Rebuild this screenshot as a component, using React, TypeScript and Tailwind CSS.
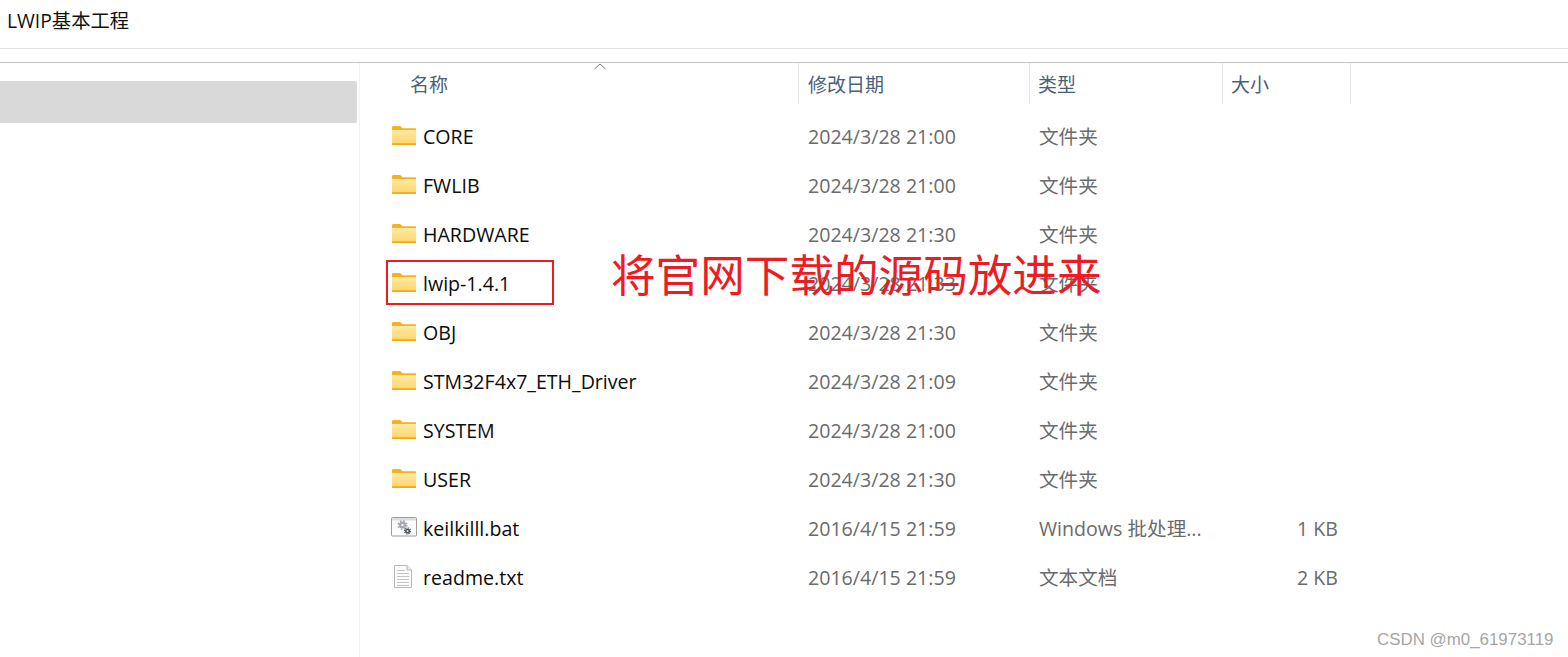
const cjk = "font-['Open_Sans','Noto_Sans_CJK_SC',sans-serif]";

function Folder() {
  return (
    <svg width="24" height="19" viewBox="0 0 24 19" className="shrink-0">
      <defs>
        <linearGradient id="fbody" x1="0" y1="0" x2="0" y2="1">
          <stop offset="0" stopColor="#ffe9a6" />
          <stop offset="1" stopColor="#fdd468" />
        </linearGradient>
      </defs>
      <path d="M0 1.500C0 .6.600 0 1.500 0h6c.6 0 1 .2 1.400.6L10.500 2.200H23c.6 0 1 .4 1 1V5H0Z" fill="#f6b21c" />
      <path d="M0 4h23c.6 0 1 .4 1 1v13c0 .6-.4 1-1 1H1c-.6 0-1-.4-1-1Z" fill="url(#fbody)" />
      <path d="M0 17.300h24V18c0 .6-.4 1-1 1H1c-.6 0-1-.4-1-1Z" fill="#efa91d" />
    </svg>
  );
}

function Bat() {
  return (
    <svg width="26" height="20" viewBox="0 0 26 20" className="shrink-0">
      <rect x="0.500" y="0.500" width="25" height="18.500" rx="1" fill="#fcfcfc" stroke="#9c9c9c" />
      <path d="M1 1h24v2.500H1Z" fill="#dedede" />
      <circle cx="11.500" cy="8" r="3.600" fill="#a3a8ad" />
      <circle cx="11.500" cy="8" r="4.300" fill="none" stroke="#a3a8ad" strokeWidth="1.400" strokeDasharray="1.700 1.700" />
      <circle cx="11.500" cy="8" r="1.300" fill="#eeeeee" />
      <circle cx="16.500" cy="14" r="2.600" fill="#565c62" />
      <circle cx="16.500" cy="14" r="3.100" fill="none" stroke="#565c62" strokeWidth="1.100" strokeDasharray="1.300 1.100" />
      <circle cx="16.500" cy="14" r="0.900" fill="#dddddd" />
    </svg>
  );
}

function Txt() {
  return (
    <svg width="24" height="23" viewBox="0 0 24 23" className="shrink-0">
      <path d="M3.500.5h12.500l4.500 4.500v17.500h-17Z" fill="#fdfdfd" stroke="#b8b8b8" />
      <path d="M16 .5v4.500h4.500" fill="#eeeeee" stroke="#b8b8b8" />
      <path d="M6 5.500h8M6 8.500h12M6 11.500h12M6 14.500h12M6 17.500h12M6 20.500h12" stroke="#c2c2c2" strokeWidth="1" />
    </svg>
  );
}

const rows = [
  { n: "CORE", d: "2024/3/28 21:00", t: "文件夹", s: "", i: <Folder /> },
  { n: "FWLIB", d: "2024/3/28 21:00", t: "文件夹", s: "", i: <Folder /> },
  { n: "HARDWARE", d: "2024/3/28 21:30", t: "文件夹", s: "", i: <Folder /> },
  { n: "lwip-1.4.1", d: "2024/3/28 21:33", t: "文件夹", s: "", i: <Folder /> },
  { n: "OBJ", d: "2024/3/28 21:30", t: "文件夹", s: "", i: <Folder /> },
  { n: "STM32F4x7_ETH_Driver", d: "2024/3/28 21:09", t: "文件夹", s: "", i: <Folder /> },
  { n: "SYSTEM", d: "2024/3/28 21:00", t: "文件夹", s: "", i: <Folder /> },
  { n: "USER", d: "2024/3/28 21:30", t: "文件夹", s: "", i: <Folder /> },
  { n: "keilkilll.bat", d: "2016/4/15 21:59", t: "Windows 批处理...", s: "1 KB", i: <Bat /> },
  { n: "readme.txt", d: "2016/4/15 21:59", t: "文本文档", s: "2 KB", i: <Txt /> },
];

export default function App() {
  return (
    <div className={`relative h-[657px] w-[1568px] overflow-hidden bg-white ${cjk}`}>
      <div className="flex h-[48px] items-center pl-[7px] pb-[6px] text-[19.3px] text-[#111111]">LWIP基本工程</div>
      <div className="h-[14px] border-t border-[#e2e2e2]" />
      <div className="flex h-[595px] border-t border-[#c2c2c2]">
        <aside className="h-full w-[360px] shrink-0 border-r border-[#f1f1f1] pt-[18px]">
          <div className="h-[42px] w-[357px] rounded-r-[2px] bg-[#d9d9d9]" />
        </aside>
        <main className="relative flex-1">
          <span className="absolute left-[234px] top-0">
            <svg width="12" height="7" viewBox="0 0 12 7" fill="none" stroke="#707070" className="block"><path d="M.5 6 6 1l5.500 5" /></svg>
          </span>
          <div className="flex h-[41px] text-[19px] text-[#4c607a]">
            <div className="flex w-[438px] items-center pt-[3px] pl-[50px]">名称</div>
            <div className="flex w-[231px] items-center border-l border-[#e5e5e5] pt-[3px] pl-[9px]">修改日期</div>
            <div className="flex w-[193px] items-center border-l border-[#e5e5e5] pt-[3px] pl-[8px]">类型</div>
            <div className="flex w-[129px] items-center border-x border-[#e5e5e5] pt-[3px] pl-[8px]">大小</div>
          </div>
          <div className="pt-[8px]">
            {rows.map((r) => (
              <div key={r.n} className="flex h-[49px] items-center text-[19.6px]">
                <div className="flex w-[438px] items-center pl-[31px]">
                  <span className={`flex w-[32px] -translate-y-[1px] items-center ${r.i.type === Folder ? "pl-[1px]" : ""}`}>{r.i}</span>
                  <span className="text-[#0c0c0c]">{r.n}</span>
                </div>
                <div className="w-[231px] pl-[10px] text-[#6b6b6b]">{r.d}</div>
                <div className="w-[193px] pl-[10px] text-[#6b6b6b]">{r.t}</div>
                <div className="w-[116px] text-right text-[#6b6b6b]">{r.s}</div>
              </div>
            ))}
          </div>
        </main>
      </div>
      <div className="absolute left-[386px] top-[260px] h-[45px] w-[168px] border-2 border-[#ed1c24]" />
      <div className="absolute left-[611px] top-[243px] whitespace-nowrap font-['Noto_Sans_CJK_SC',sans-serif] text-[44.6px] leading-[60px] font-normal text-[#ed1c24]">将官网下载的源码放进来</div>
      <div className="absolute left-[1377px] top-[630px] font-['Liberation_Sans',sans-serif] text-[16.9px] leading-[20px] text-[#a6a6a6]">CSDN @m0_61973119</div>
    </div>
  );
}
